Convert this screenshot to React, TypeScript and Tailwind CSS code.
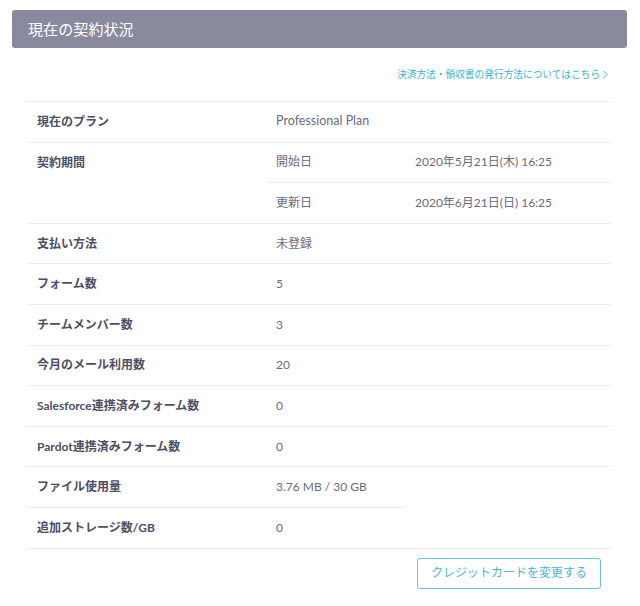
import React from "react";

const font = { fontFamily: "Lato, 'Noto Sans CJK JP', sans-serif" };

type Row = { label: string; value?: string; sub?: { k: string; v: string }[]; narrow?: boolean };

const rows: Row[] = [
  { label: "現在のプラン", value: "Professional Plan" },
  {
    label: "契約期間",
    sub: [
      { k: "開始日", v: "2020年5月21日(木) 16:25" },
      { k: "更新日", v: "2020年6月21日(日) 16:25" },
    ],
  },
  { label: "支払い方法", value: "未登録" },
  { label: "フォーム数", value: "5" },
  { label: "チームメンバー数", value: "3" },
  { label: "今月のメール利用数", value: "20" },
  { label: "Salesforce連携済みフォーム数", value: "0" },
  { label: "Pardot連携済みフォーム数", value: "0" },
  { label: "ファイル使用量", value: "3.76 MB / 30 GB", narrow: true },
  { label: "追加ストレージ数/GB", value: "0" },
];

export default function App() {
  return (
    <div className="w-[640px] h-[606px] bg-white px-[12px] pt-[10px]" style={font}>
      <div className="h-[38px] w-[615px] rounded-[3px] bg-[#8a8a9f] flex items-center pl-[16px]">
        <span className="text-[15px] text-white tracking-[0.1px]">現在の契約状況</span>
      </div>
      <div className="pl-[15px] w-[600px]">
        <div className="flex justify-end items-center h-[14px] mt-[19px] mb-[20px] pr-[3px]">
          <span className="text-[9.7px] text-[#3cb3d1] leading-[14px]">決済方法・領収書の発行方法についてはこちら</span>
          <svg width="7" height="9" viewBox="0 0 7 9" className="ml-[2px]">
            <polyline points="1.5,1 5,4.5 1.5,8" fill="none" stroke="#3cb3d1" strokeWidth="1" />
          </svg>
        </div>
        <div className="w-[584px] border-t border-[#ececef]">
          {rows.map((r) =>
            r.sub ? (
              <div key={r.label} className="flex border-b border-[#ececef]">
                <div className="w-[239px] pl-[10px] pt-[11px] text-[12px] font-bold text-[#4e4e63]">{r.label}</div>
                <div className="flex-1 flex flex-col">
                  {r.sub.map((s, i) => (
                    <div
                      key={s.k}
                      className={
                        i === 0
                          ? "h-[40.6px] flex items-center border-b border-[#ececef] text-[12px] text-[#6b6b7d]"
                          : "h-[39.6px] flex items-center text-[12px] text-[#6b6b7d]"
                      }
                    >
                      <div className="w-[139px] pl-[10px]">{s.k}</div>
                      <div className="pl-[10px]">{s.v}</div>
                    </div>
                  ))}
                </div>
              </div>
            ) : r.narrow ? (
              <div key={r.label} className="flex h-[40.6px]">
                <div className="w-[239px] h-full flex items-center pl-[10px] border-b border-[#ececef] text-[12px] font-bold text-[#4e4e63]">
                  {r.label}
                </div>
                <div className="w-[139px] h-full flex items-center pl-[10px] border-b border-[#ececef] text-[12px] text-[#6b6b7d]">
                  {r.value}
                </div>
              </div>
            ) : (
              <div key={r.label} className="flex h-[40.6px] items-center border-b border-[#ececef]">
                <div className="w-[239px] pl-[10px] text-[12px] font-bold text-[#4e4e63]">{r.label}</div>
                <div className={r.value === "Professional Plan" ? "pl-[10px] text-[12.5px] text-[#6b6b7d]" : "pl-[10px] text-[12px] text-[#6b6b7d]"}>{r.value}</div>
              </div>
            )
          )}
        </div>
        <div className="w-[584px] flex justify-end pr-[10px] mt-[9px]">
          <button className="w-[184px] h-[31px] rounded-[3px] border border-[#6cc3dc] text-[12px] text-[#4fb5d3] bg-white">
            クレジットカードを変更する
          </button>
        </div>
      </div>
    </div>
  );
}
